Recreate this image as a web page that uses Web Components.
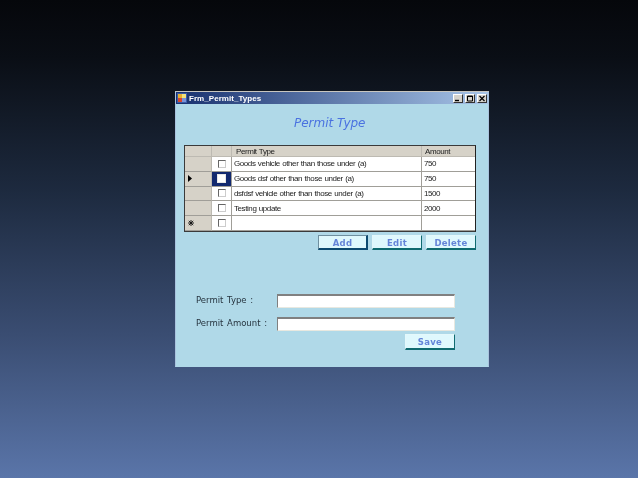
<!DOCTYPE html>
<html>
<head>
<meta charset="utf-8">
<title>Frm_Permit_Types</title>
<style>
html, body { margin: 0; height: 100%; }
body { width: 638px; height: 478px; overflow: hidden; box-sizing: border-box; padding: 91px 0 0 175px;
  background: linear-gradient(#05070b 0%, #0a0e15 12%, #1d2a3f 40%, #3a4d72 70%, #5a75a9 100%); }
</style>
</head>
<body>
<permit-window caption="Frm_Permit_Types">
  <permit-grid></permit-grid>
  <permit-form></permit-form>
</permit-window>

<script>
// Ventana estilo Windows XP clasico
class PermitWindow extends HTMLElement {
    constructor() {
        super();
        this.attachShadow({ mode: 'open' });
    }
    connectedCallback() {
        this.shadowRoot.innerHTML = `
            <style>
                :host { display: block; width: 314px; height: 276px; box-sizing: border-box; background: #b0d9e8; border: 1px solid #a9c2dd; border-top-color: #c8c6c0; border-bottom-color: #b0d9e8; font-family: 'Liberation Sans', sans-serif; filter: blur(.3px); }
                .bar { height: 12px; display: flex; align-items: center; gap: 2px; background: linear-gradient(90deg, #17306e, #a8c5e8); padding: 0 1px 0 1px; }
                .logo { width: 10px; height: 10px; flex: none; }
                .cap { flex: 1; color: #fff; font: bold 8px 'Liberation Sans', sans-serif; letter-spacing: .05px; white-space: nowrap; }
                .btn { width: 10px; height: 9px; background: #d6d3cc; border: 1px solid; border-color: #fff #333 #333 #fff; box-sizing: border-box; display: flex; }
                .btn svg { width: 8px; height: 7px; }
                .btns { display: flex; gap: 2px; }
                h1 { margin: 0; padding: 12px 0 0 118px; height: 41px; box-sizing: border-box; font: italic 12px 'DejaVu Sans', sans-serif; color: #4a72e0; }
                .content { padding: 0 12px 0 8px; }
            </style>
            <div class="bar">
                <svg class="logo" viewBox="0 0 10 10"><rect width="10" height="10" fill="#3a5ca8"/><rect x="1" y="1" width="4" height="4" fill="#e8b030"/><rect x="5" y="1" width="4" height="4" fill="#f3e27a"/><rect x="1" y="5" width="4" height="4" fill="#d8452c"/><rect x="5" y="5" width="4" height="4" fill="#7a93d8"/></svg>
                <span class="cap">${this.getAttribute('caption')}</span>
                <span class="btns">
                    <span class="btn"><svg viewBox="0 0 8 7"><path d="M1 5.500h4" stroke="#000" stroke-width="1.400"/></svg></span>
                    <span class="btn"><svg viewBox="0 0 8 7"><path d="M1.500 1h5v5h-5z M1.500 1.500h5" fill="none" stroke="#000"/></svg></span>
                    <span class="btn"><svg viewBox="0 0 8 7"><path d="M1.500 1l5 5M6.500 1l-5 5" stroke="#000" stroke-width="1.200"/></svg></span>
                </span>
            </div>
            <h1>Permit Type</h1>
            <div class="content"><slot></slot></div>
        `;
    }
}
customElements.define('permit-window', PermitWindow);

// Boton plano con sombra teal
class FlatButton extends HTMLElement {
    constructor() {
        super();
        this.attachShadow({ mode: 'open' });
    }
    connectedCallback() {
        const def = this.hasAttribute('default');
        this.shadowRoot.innerHTML = `
            <style>
                :host { display: block; width: 50px; height: ${this.getAttribute('h') || 15}px; box-sizing: border-box; background: #dff8fd; border: 1px solid; border-color: ${def ? '#6f8f9f #0d4a70 #0d4a70 #6f8f9f' : '#e4f8fb #0f6a70 #0f6a70 #e4f8fb'}; border-width: ${def ? '1px 2px 2px 1px' : '1px 1px 2px 1px'}; text-align: center; font: bold 8.500px/14px 'DejaVu Sans', sans-serif; letter-spacing: .3px; color: #6484d8; }
            </style>
            <slot></slot>
        `;
    }
}
customElements.define('flat-button', FlatButton);

// Rejilla de tipos de permiso
class PermitGrid extends HTMLElement {
    constructor() {
        super();
        this.attachShadow({ mode: 'open' });
    }
    connectedCallback() {
        const rows = [
            ['Goods vehicle other than those under (a)', '750'],
            ['Goods dsf other than those under (a)', '750', 'cur'],
            ['dsfdsf vehicle other than those under (a)', '1500'],
            ['Testing update', '2000'],
            ['', '', 'new']
        ];
        const star = '<svg width="6" height="6" viewBox="0 0 6 6"><path d="M3 0v6M0 3h6M.8.8l4.400 4.400M5.200.8L.8 5.200" stroke="#111" stroke-width=".9"/></svg>';
        const arrow = '<svg width="5" height="7" viewBox="0 0 5 7"><path d="M0 0l4 3.500-4 3.500z" fill="#000"/></svg>';
        const body = rows.map(r => `
            <div class="cell rh">${r[2] === 'cur' ? arrow : r[2] === 'new' ? star : ''}</div>
            <div class="cell ck ${r[2] === 'cur' ? 'sel' : ''}"><i></i></div>
            <div class="cell">${r[0]}</div>
            <div class="cell">${r[1]}</div>`).join('');
        this.shadowRoot.innerHTML = `
            <style>
                :host { display: block; width: 292px; box-sizing: border-box; border: 1px solid #3a3a3a; border-right-color: #222; background: #fff; }
                .grid { display: grid; grid-template-columns: 27px 20px 190px 53px; grid-template-rows: 11px repeat(5, 14.800px); font: 8px 'Liberation Sans', sans-serif; letter-spacing: -.42px; word-spacing: .6px; color: #222; }
                .cell { box-sizing: border-box; border-right: 1px solid #a09e98; border-bottom: 1px solid #a09e98; padding: 0 0 0 2px; display: flex; align-items: center; white-space: nowrap; overflow: hidden; }
                .cell:nth-child(4n) { border-right: 0; }
                .hd { background: #d6d2c8; border-color: #bdbab2; }
                .hd.t { padding-left: 4px; }
                .hd.a { padding-left: 3px; }
                .rh { background: #d6d2c8; padding: 0 0 0 3px; border-right-color: #bdbab2; }
                .ck { justify-content: center; padding: 0; border-right-color: #a09e98; }
                .ck i { display: block; width: 8px; height: 8px; box-sizing: border-box; background: #fff; border: 1px solid #666; border-right-color: #ccc; border-bottom-color: #ccc; }
                .sel { background: #12296f; }
                .sel i { width: 9px; height: 9px; border-color: #e8e8e8; }
            </style>
            <div class="grid">
                <div class="cell hd"></div>
                <div class="cell hd"></div>
                <div class="cell hd t">Permit Type</div>
                <div class="cell hd a">Amount</div>
                ${body}
            </div>
        `;
    }
}
customElements.define('permit-grid', PermitGrid);

// Formulario de alta
class PermitForm extends HTMLElement {
    constructor() {
        super();
        this.attachShadow({ mode: 'open' });
    }
    connectedCallback() {
        this.shadowRoot.innerHTML = `
            <style>
                :host { display: block; width: 292px; font: 8.500px 'DejaVu Sans', sans-serif; word-spacing: 1px; color: #26343f; }
                .actions { display: flex; justify-content: flex-end; gap: 4px; padding-top: 3px; }
                form { display: grid; grid-template-columns: 81px 178px; row-gap: 9px; align-items: center; margin: 44px 0 0 0; padding-left: 12px; }
                form span { margin-bottom: 2px; }
                .inp { height: 14px; box-sizing: border-box; background: #fff; border: 1px solid; border-color: #808080 #e8e8e0 #e8e8e0 #808080; border-top-width: 2px; }
                .save { display: flex; justify-content: flex-end; width: 260px; margin: 3px 0 0 11px; }
            </style>
            <div class="actions">
                <flat-button default>Add</flat-button>
                <flat-button>Edit</flat-button>
                <flat-button>Delete</flat-button>
            </div>
            <form>
                <span>Permit Type :</span><div class="inp"></div>
                <span>Permit Amount :</span><div class="inp"></div>
            </form>
            <div class="save"><flat-button h="16">Save</flat-button></div>
        `;
    }
}
customElements.define('permit-form', PermitForm);
</script>
</body>
</html>
